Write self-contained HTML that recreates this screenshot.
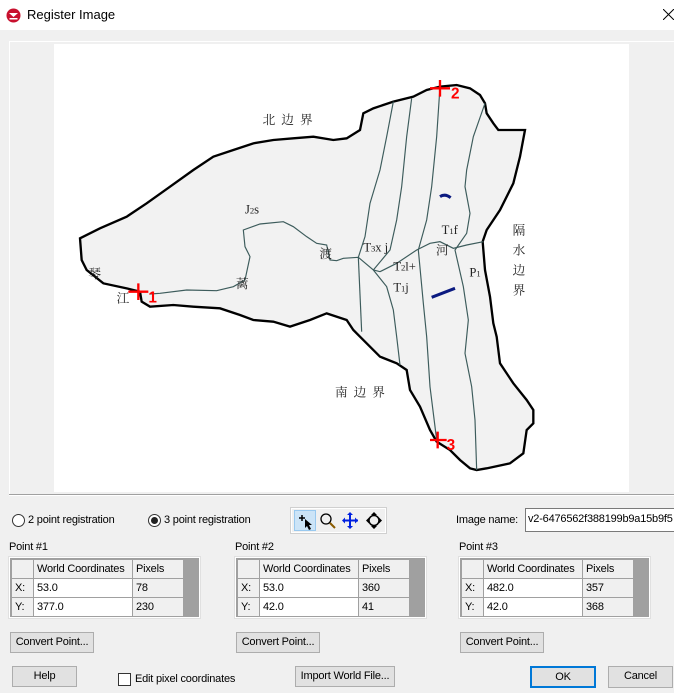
<!DOCTYPE html>
<html><head><meta charset="utf-8"><style>
*{box-sizing:border-box;margin:0;padding:0}
body{width:674px;height:693px;background:#f0f0f0;position:relative;overflow:hidden;font-family:"Liberation Sans","Noto Sans CJK SC",sans-serif;font-size:11px;letter-spacing:-0.2px;color:#000;white-space:nowrap}
.a{position:absolute}
.title{left:0;top:0;width:674px;height:30px;background:#fff}
.btn{position:absolute;background:#e1e1e1;border:1px solid #adadad;text-align:center;font-size:11px;line-height:19px;white-space:nowrap}
table{border-collapse:collapse;position:absolute;table-layout:fixed}
.tw{position:absolute;background:#a0a0a0;border:1px solid #fff;outline:1px solid #e0e0e0}
.tw td{border:1px solid #a0a0a0;height:19px;line-height:17px;padding:0 3px;font-size:11px;background:#fff;white-space:nowrap;overflow:hidden}
.tw td.h{background:#f0f0f0}
.tw td.g{background:#f0f0f0}
.rad{position:absolute;width:13px;height:13px;border:1px solid #333;border-radius:50%;background:#fff}
</style></head><body>
<div class="a title"></div>
<svg class="a" style="left:6px;top:8px" width="15" height="15" viewBox="0 0 15 15"><circle cx="7.5" cy="7.5" r="7" fill="#c8102e"/><path d="M3 5h9l-4.5 4z" fill="#fff"/><rect x="3.5" y="10" width="8" height="1.5" fill="#fff"/></svg>
<div class="a" style="left:27px;top:7px;font-size:13px;letter-spacing:0">Register Image</div>
<svg class="a" style="left:663px;top:9px" width="11" height="11" viewBox="0 0 11 11"><path d="M0 0L11 11M11 0L0 11" stroke="#000" stroke-width="1"/></svg>

<div class="a" style="left:9px;top:41px;width:665px;height:453px;border-left:1px solid #fff;border-top:1px solid #fff"></div>
<div class="a" style="left:54px;top:44px;width:575px;height:448px;background:#fff"></div>
<div class="a" style="left:9px;top:494px;width:665px;height:2px;background:#a0a0a0;border-bottom:1px solid #fff"></div>

<svg class="a" style="left:60px;top:70px;overflow:visible" width="480" height="400" viewBox="0 0 1440 1200">
<path d="M60,505 L120,475 200,440 260,400 330,350 400,300 460,260 520,240 580,220 640,210 700,205 760,200 820,210 860,205 900,180 910,130 940,115 1000,95 1060,80 1100,60 1140,50 1190,45 1230,55 1260,75 1275,100 1280,130 1300,160 1315,180 1395,180 1380,260 1360,340 1320,420 1280,480 1268,515 1275,600 1290,680 1300,760 1310,800 1320,880 1360,940 1400,990 1420,1020 1420,1060 1400,1080 1390,1150 1350,1180 1280,1195 1250,1200 1230,1195 1200,1170 1170,1140 1130,1115 1110,1080 1080,1010 1050,960 1040,900 1010,880 960,860 930,830 900,800 880,780 860,750 800,730 750,750 690,770 640,755 580,750 540,735 480,715 400,710 340,705 270,710 245,695 240,665 200,655 130,640 80,600 65,570 Z" fill="#f2f2f2" stroke="#000" stroke-width="7"/>
<g fill="none" stroke="#3d5c5c" stroke-width="3.5">
<path d="M270,672 L300,670 380,660 470,662 520,650 555,630 570,560 555,530 550,480 600,462 670,455 700,470 740,500 770,520 800,525 810,570 830,572 850,565 895,562 L940,600 L960,605 1010,580 1070,540 1110,520 1140,515 1180,535 1220,525 1270,515"/>
<path d="M895,562 L905,785"/>
<path d="M1000,95 L980,200 960,300 930,400 915,500 895,562"/>
<path d="M1055,85 L1040,200 1025,350 1010,450 990,540 940,600 M940,600 L980,650 1000,720 1010,800 1020,885"/>
<path d="M1140,50 L1130,200 1115,350 1100,450 1075,540 1090,700 1100,800 1110,950 1130,1110"/>
<path d="M1275,100 L1240,200 1220,300 1215,350 1230,430 1220,490 1185,540 1210,650 1225,750 1215,850 1235,950 1245,1050 1250,1200"/>
</g>
<path d="M1140,380 Q1155,370 1172,383 M1115,682 L1185,655" stroke="#0b1a80" stroke-width="9" fill="none"/>
<g stroke="#f00" stroke-width="7"><path d="M205,665h60M235,640v50M1110,55h60M1140,30v50M1110,1110h50M1133,1085v50"/></g>
<g fill="#f00" font-size="46" font-weight="bold" font-family="Liberation Sans,sans-serif"><text x="265" y="698">1</text><text x="1173" y="85">2</text><text x="1160" y="1140">3</text></g>
<g font-size="38" fill="#222" font-family="Liberation Serif,Noto Serif CJK SC,serif">
<text x="608" y="162" letter-spacing="18">北边界</text>
<text x="825" y="980" letter-spacing="18">南边界</text>
<text x="1358" y="494">隔</text><text x="1358" y="554">水</text><text x="1358" y="614">边</text><text x="1358" y="674">界</text>
<text x="555" y="430">J<tspan font-size="26">2</tspan>s</text>
<text x="778" y="564">渡</text><text x="528" y="654">蓠</text><text x="85" y="624">琴</text><text x="170" y="697">江</text>
<text x="910" y="544">T<tspan font-size="26">3</tspan>x j</text>
<text x="1000" y="602">T<tspan font-size="26">2</tspan>l+</text>
<text x="1000" y="664">T<tspan font-size="26">1</tspan>j</text>
<text x="1145" y="492">T<tspan font-size="26">1</tspan>f</text>
<text x="1128" y="554">河</text>
<text x="1228" y="620">P<tspan font-size="26">1</tspan></text>
</g>
</svg>

<div class="rad" style="left:12px;top:514px"></div>
<div class="a" style="left:28px;top:514px">2 point registration</div>
<div class="rad" style="left:148px;top:514px"></div><div class="a" style="left:151px;top:517px;width:7px;height:7px;border-radius:50%;background:#222"></div>
<div class="a" style="left:164px;top:514px">3 point registration</div>

<div class="a" style="left:291px;top:508px;width:95px;height:25px;border:1px solid #fff;outline:1px solid #d0d0d0"></div>
<div class="a" style="left:294px;top:510px;width:22px;height:21px;background:#cce4f7;border:1px solid #99c9ef"></div>
<svg class="a" style="left:294px;top:510px" width="92" height="21" viewBox="0 0 92 21">
<path d="M8 5v6M5 8h6" stroke="#000" stroke-width="1.5"/><path d="M11 9l0 9 2-2 2 4 2-1-2-4 3 0z" fill="#000"/>
<circle cx="32" cy="9" r="5" fill="none" stroke="#000" stroke-width="1.3"/><path d="M36 13l5 5" stroke="#8a5a00" stroke-width="2"/>
<path d="M56 3v15M49 10.5h15" stroke="#0020e0" stroke-width="2"/><path d="M56 2l-3 3h6zM56 19l-3-3h6zM48 10.5l3-3v6zM64 10.5l-3-3v6z" fill="#0020e0"/>
<circle cx="80" cy="10.5" r="5" fill="none" stroke="#000" stroke-width="1.5"/><path d="M80 2l-3 3h6zM80 19l-3-3h6zM72 10.5l3-3v6zM88 10.5l-3-3v6z" fill="#000"/>
</svg>

<div class="a" style="left:456px;top:514px">Image name:</div>
<div class="a" style="left:525px;top:508px;width:160px;height:24px;background:#fff;border:1px solid #7a7a7a;padding:4px 2px;overflow:hidden">v2-6476562f388199b9a15b9f5</div>

<div class="a" style="left:9px;top:541px">Point #1</div>
<div class="a" style="left:235px;top:541px">Point #2</div>
<div class="a" style="left:459px;top:541px">Point #3</div>

<div class="tw" style="left:9px;top:557px;width:191px;height:61px">
<table style="left:1px;top:1px;width:172px"><col style="width:22px"><col style="width:99px"><col style="width:51px"><tr><td class="h"></td><td class="h">World Coordinates</td><td class="h">Pixels</td></tr>
<tr><td class="h">X:</td><td>53.0</td><td class="g">78</td></tr><tr><td class="h">Y:</td><td>377.0</td><td class="g">230</td></tr></table></div>
<div class="tw" style="left:235px;top:557px;width:191px;height:61px">
<table style="left:1px;top:1px;width:172px"><col style="width:22px"><col style="width:99px"><col style="width:51px"><tr><td class="h"></td><td class="h">World Coordinates</td><td class="h">Pixels</td></tr>
<tr><td class="h">X:</td><td>53.0</td><td class="g">360</td></tr><tr><td class="h">Y:</td><td>42.0</td><td class="g">41</td></tr></table></div>
<div class="tw" style="left:459px;top:557px;width:191px;height:61px">
<table style="left:1px;top:1px;width:172px"><col style="width:22px"><col style="width:99px"><col style="width:51px"><tr><td class="h"></td><td class="h">World Coordinates</td><td class="h">Pixels</td></tr>
<tr><td class="h">X:</td><td>482.0</td><td class="g">357</td></tr><tr><td class="h">Y:</td><td>42.0</td><td class="g">368</td></tr></table></div>

<div class="btn" style="left:10px;top:632px;width:84px;height:21px">Convert Point...</div>
<div class="btn" style="left:236px;top:632px;width:84px;height:21px">Convert Point...</div>
<div class="btn" style="left:460px;top:632px;width:84px;height:21px">Convert Point...</div>

<div class="btn" style="left:12px;top:666px;width:65px;height:21px">Help</div>
<div class="a" style="left:118px;top:673px;width:13px;height:13px;border:1px solid #333;background:#fff"></div>
<div class="a" style="left:135px;top:673px">Edit pixel coordinates</div>
<div class="btn" style="left:295px;top:666px;width:100px;height:21px">Import World File...</div>
<div class="btn" style="left:530px;top:666px;width:66px;height:22px;border:2px solid #0078d7;line-height:18px">OK</div>
<div class="btn" style="left:608px;top:666px;width:65px;height:22px">Cancel</div>
</body></html>
